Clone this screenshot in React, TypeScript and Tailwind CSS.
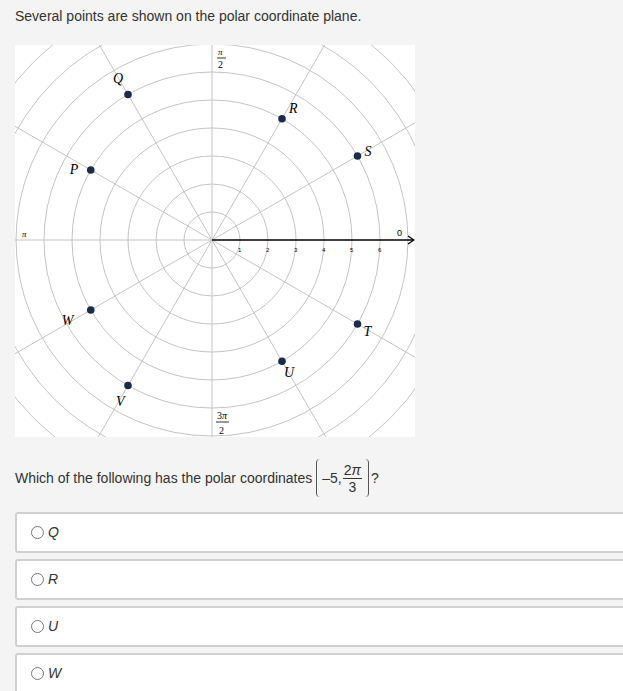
import React from "react";

const O = { x: 197, y: 195 };
const U = 28;

function pt(r: number, deg: number) {
  const a = (deg * Math.PI) / 180;
  return { x: O.x + r * U * Math.cos(a), y: O.y - r * U * Math.sin(a) };
}

const points: { n: string; r: number; d: number; dx: number; dy: number }[] = [
  { n: "Q", r: 6, d: 120, dx: -15, dy: -12 },
  { n: "R", r: 5, d: 60, dx: 7, dy: -6 },
  { n: "S", r: 6, d: 30, dx: 7, dy: 0 },
  { n: "P", r: 5, d: 150, dx: -21, dy: 4 },
  { n: "W", r: 5, d: 210, dx: -29, dy: 15 },
  { n: "V", r: 6, d: 240, dx: -12, dy: 21 },
  { n: "U", r: 5, d: 300, dx: 2, dy: 16 },
  { n: "T", r: 6, d: 330, dx: 6, dy: 12 },
];

function Graph() {
  return (
    <svg width="400" height="392" viewBox="0 0 400 392" className="bg-white block">
      {[1, 2, 3, 4, 5, 6, 7, 8, 9].map((r) => (
        <circle key={r} cx={O.x} cy={O.y} r={r * U} fill="none" stroke="#c4c4c4" strokeWidth="1" />
      ))}
      {[30, 60, 90, 120, 150, 180, 210, 240, 270, 300, 330].map((d) => {
        const p = pt(12, d);
        return <line key={d} x1={O.x} y1={O.y} x2={p.x} y2={p.y} stroke="#c4c4c4" strokeWidth="1" />;
      })}
      <line x1={O.x} y1={O.y} x2={398} y2={O.y} stroke="#000" strokeWidth="1.3" />
      <path d="M393 191 L399 195 L393 199" fill="none" stroke="#000" strokeWidth="1.2" />
      {[1, 2, 3, 4, 5, 6].map((n) => (
        <text key={n} x={O.x + n * U - 2} y={O.y + 12} fontSize="6" fontFamily="Liberation Sans, sans-serif">{n}</text>
      ))}
      <text x={382} y={191} fontSize="9" fontFamily="Liberation Sans, sans-serif">0</text>
      <text x={7} y={192} fontSize="9" fontStyle="italic" fontFamily="Liberation Serif, serif">π</text>
      <g fontFamily="Liberation Serif, serif" fontSize="10">
        <text x={203} y={10} fontStyle="italic" fontSize="9">π</text>
        <line x1={202} y1={13} x2={211} y2={13} stroke="#000" strokeWidth="0.8" />
        <text x={203} y={23}>2</text>
        <text x={202} y={374}>3<tspan fontStyle="italic">π</tspan></text>
        <line x1={201} y1={377} x2={214} y2={377} stroke="#000" strokeWidth="0.8" />
        <text x={204} y={389}>2</text>
      </g>
      {points.map((p) => {
        const c = pt(p.r, p.d);
        return (
          <g key={p.n}>
            <circle cx={c.x} cy={c.y} r="3.8" fill="#1c2b4a" />
            <text x={c.x + p.dx} y={c.y + p.dy} fontSize="14" fontStyle="italic" fontFamily="Liberation Serif, serif">{p.n}</text>
          </g>
        );
      })}
    </svg>
  );
}

function Option({ label }: { label: string }) {
  return (
    <div className="h-[41px] border-2 border-[#d0d0d0] rounded-[3px] bg-white flex items-center pl-[14px] mb-[6px] w-[620px]">
      <span className="w-[13px] h-[13px] rounded-full border border-[#777] bg-white mr-[4px]" />
      <span className="italic text-[14px] text-[#333]">{label}</span>
    </div>
  );
}

function Paren({ right }: { right?: boolean }) {
  return (
    <span
      className={
        right
          ? "w-[4px] h-[38px] border-r border-[#555] rounded-r-[6px] mx-[2px]"
          : "w-[4px] h-[38px] border-l border-[#555] rounded-l-[6px] mx-[2px]"
      }
    />
  );
}

export default function App() {
  return (
    <div className="w-[623px] h-[691px] overflow-hidden bg-[#f4f4f4] pl-[15px] pt-[7px] text-[#333]" style={{ fontFamily: "'Liberation Sans', Arial, sans-serif" }}>
      <p className="text-[14px] leading-[18px]">Several points are shown on the polar coordinate plane.</p>
      <div className="mt-[20px]">
        <Graph />
      </div>
      <div className="mt-[20px] flex items-center text-[14px] h-[42px]">
        <span>Which of the following has the polar coordinates</span>
        <span className="ml-[2px] flex items-center">
          <Paren />
          <span>–5,</span>
          <span className="flex flex-col items-center leading-[16px] mx-[1px]">
            <span className="border-b border-[#333] px-[1px]">2<i>π</i></span>
            <span>3</span>
          </span>
          <Paren right />
          <span>?</span>
        </span>
      </div>
      <div className="mt-[13px]">
        <Option label="Q" />
        <Option label="R" />
        <Option label="U" />
        <Option label="W" />
      </div>
    </div>
  );
}
